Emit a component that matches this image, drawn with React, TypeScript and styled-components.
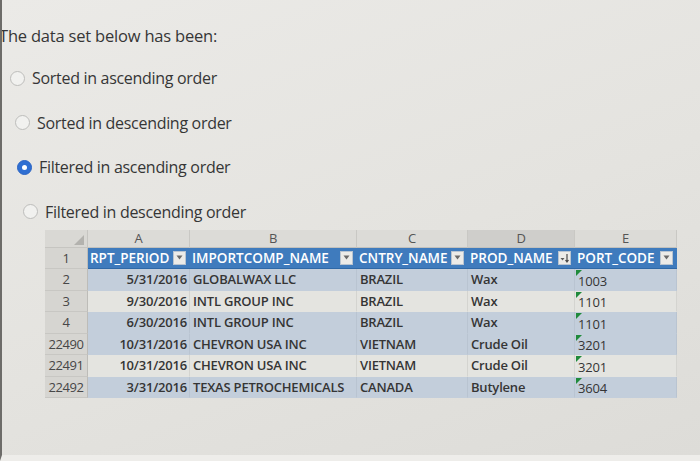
import React from 'react';
import styled, { createGlobalStyle } from 'styled-components';

const GlobalStyle = createGlobalStyle`
	html, body {
		margin: 0;
		padding: 0;
		background: #e4e3df;
	}
	body {
		font-family: 'Open Sans', 'Liberation Sans', sans-serif;
	}
`;

const Page = styled.div`
	width: 700px;
	height: 461px;
	box-sizing: border-box;
	border-left: 2px solid #6d6c69;
	border-bottom: 6px solid #eeedea;
	background: linear-gradient(160deg, #ebeae7 0%, #e4e3df 55%, #dddcd8 100%);
	overflow: hidden;
	display: flex;
	flex-direction: column;
`;

const Title = styled.div`
	margin: 25px 0 0 -3px;
	font-size: 16.5px;
	font-weight: 500;
	line-height: 22px;
	color: #363636;
	letter-spacing: -0.2px;
`;

const Options = styled.div`
	display: flex;
	flex-direction: column;
	gap: 22.5px;
	margin-top: 20px;
`;

const Option = styled.label<{ $indent: number }>`
	display: flex;
	align-items: center;
	gap: 7px;
	padding-left: ${(p) => p.$indent}px;
	height: 22px;
	font-size: 16px;
	font-weight: 500;
	color: #363636;
	letter-spacing: -0.3px;
`;

const Radio = styled.span<{ $checked?: boolean }>`
	width: 15px;
	height: 15px;
	border-radius: 50%;
	box-sizing: border-box;
	flex: none;
	background: ${(p) => (p.$checked ? '#2f6fd2' : '#f1f1ef')};
	border: 1px solid ${(p) => (p.$checked ? '#2a64c4' : '#bdbdbb')};
	position: relative;
	&::after {
		content: '';
		display: ${(p) => (p.$checked ? 'block' : 'none')};
		position: absolute;
		inset: 0;
		margin: auto;
		width: 5px;
		height: 5px;
		border-radius: 50%;
		background: #fff;
	}
`;

const Sheet = styled.div`
	margin: 7px 0 0 43px;
	display: grid;
	grid-template-columns: 43px 102px 167px 111px 107px 102px;
	grid-template-rows: 18px repeat(7, 21.5px);
	font-size: 13px;
	font-weight: 600;
	color: #353535;
	letter-spacing: -0.2px;
	width: max-content;
`;

const Corner = styled.div`
	background: #d9d8d4;
	border-right: 1px solid #c6c5c1;
	border-bottom: 1px solid #c6c5c1;
	position: relative;
	&::after {
		content: '';
		position: absolute;
		right: 3px;
		bottom: 2px;
		border-left: 10px solid transparent;
		border-bottom: 10px solid #b3b2ae;
	}
`;

const ColLetter = styled.div<{ $active?: boolean }>`
	background: ${(p) => (p.$active ? '#cfcecb' : '#dcdbd7')};
	border-right: 1px solid #c9c8c4;
	border-bottom: 1px solid #c2c1bd;
	display: flex;
	align-items: center;
	justify-content: center;
	font-weight: 400;
	font-size: 13px;
	color: #555;
`;

const RowNum = styled.div`
	background: #d6d5d1;
	border-right: 1px solid #bdbcb8;
	border-bottom: 1px solid #c8c7c3;
	display: flex;
	align-items: center;
	justify-content: center;
	font-weight: 400;
	color: #474747;
	font-size: 13px;
	letter-spacing: -0.4px;
`;

const HeadCell = styled.div`
	background: #3f7bbd;
	color: #fff;
	display: flex;
	align-items: center;
	justify-content: space-between;
	padding: 0 4px 0 2px;
	border-bottom: 1px solid #2f68a6;
	font-size: 13.5px;
	letter-spacing: 0;
`;

const FilterBtn = styled.span`
	width: 11px;
	height: 12px;
	background: #ecebe8;
	border: 1px solid #b9c4d0;
	display: flex;
	align-items: center;
	justify-content: center;
	flex: none;
`;

const Cell = styled.div<{ $band: boolean; $align?: 'left' | 'right' }>`
	background: ${(p) => (p.$band ? '#c3cedb' : '#e4e4e0')};
	border-right: 1px solid ${(p) => (p.$band ? '#b9c4d1' : '#d4d4d0')};
	border-bottom: 1px solid ${(p) => (p.$band ? '#c3cedb' : '#e4e4e0')};
	display: flex;
	align-items: center;
	justify-content: ${(p) => (p.$align === 'right' ? 'flex-end' : 'flex-start')};
	padding: 0 2px 0 3px;
	white-space: nowrap;
	position: relative;
`;

const CodeCell = styled(Cell)`
	align-items: flex-end;
	padding-bottom: 0;
	font-weight: 400;
	&::before {
		content: '';
		position: absolute;
		left: 1px;
		top: 1px;
		border-top: 6px solid #1f8a3b;
		border-right: 6px solid transparent;
	}
`;

const DownArrow = () => (
	<svg width='7' height='5' viewBox='0 0 7 5'>
		<path d='M0.5 0.5h6L3.5 4.5z' fill='#6a6a6a' />
	</svg>
);

const SortArrow = () => (
	<svg width='10' height='10' viewBox='0 0 10 10'>
		<path d='M0.5 5h4L2.5 7.5z' fill='#5a5a5a' />
		<path d='M7 1v8M5.5 7l1.5 2 1.5-2' stroke='#4a4a4a' strokeWidth='1.2' fill='none' />
	</svg>
);

const headers = ['RPT_PERIOD', 'IMPORTCOMP_NAME', 'CNTRY_NAME', 'PROD_NAME', 'PORT_CODE'];

const rows = [
	{ n: '2', date: '5/31/2016', company: 'GLOBALWAX LLC', country: 'BRAZIL', product: 'Wax', code: '1003' },
	{ n: '3', date: '9/30/2016', company: 'INTL GROUP INC', country: 'BRAZIL', product: 'Wax', code: '1101' },
	{ n: '4', date: '6/30/2016', company: 'INTL GROUP INC', country: 'BRAZIL', product: 'Wax', code: '1101' },
	{ n: '22490', date: '10/31/2016', company: 'CHEVRON USA INC', country: 'VIETNAM', product: 'Crude Oil', code: '3201' },
	{ n: '22491', date: '10/31/2016', company: 'CHEVRON USA INC', country: 'VIETNAM', product: 'Crude Oil', code: '3201' },
	{ n: '22492', date: '3/31/2016', company: 'TEXAS PETROCHEMICALS', country: 'CANADA', product: 'Butylene', code: '3604' }
];

const options = [
	{ label: 'Sorted in ascending order', indent: 8 },
	{ label: 'Sorted in descending order', indent: 13 },
	{ label: 'Filtered in ascending order', indent: 15, checked: true },
	{ label: 'Filtered in descending order', indent: 21 }
];

const App = () => (
	<>
		<GlobalStyle />
		<Page>
			<Title>The data set below has been:</Title>
			<Options>
				{options.map((o) => (
					<Option key={o.label} $indent={o.indent}>
						<Radio $checked={o.checked} />
						{o.label}
					</Option>
				))}
			</Options>
			<Sheet>
				<Corner />
				{['A', 'B', 'C', 'D', 'E'].map((l) => (
					<ColLetter key={l} $active={l === 'D'}>
						{l}
					</ColLetter>
				))}
				<RowNum>1</RowNum>
				{headers.map((h) => (
					<HeadCell key={h}>
						{h}
						<FilterBtn>{h === 'PROD_NAME' ? <SortArrow /> : <DownArrow />}</FilterBtn>
					</HeadCell>
				))}
				{rows.map((r, i) => {
					const band = Number(r.n) % 2 === 0;
					return (
						<React.Fragment key={r.n + i}>
							<RowNum>{r.n}</RowNum>
							<Cell $band={band} $align='right'>
								{r.date}
							</Cell>
							<Cell $band={band}>{r.company}</Cell>
							<Cell $band={band}>{r.country}</Cell>
							<Cell $band={band}>{r.product}</Cell>
							<CodeCell $band={band}>{r.code}</CodeCell>
						</React.Fragment>
					);
				})}
			</Sheet>
		</Page>
	</>
);

export default App;
